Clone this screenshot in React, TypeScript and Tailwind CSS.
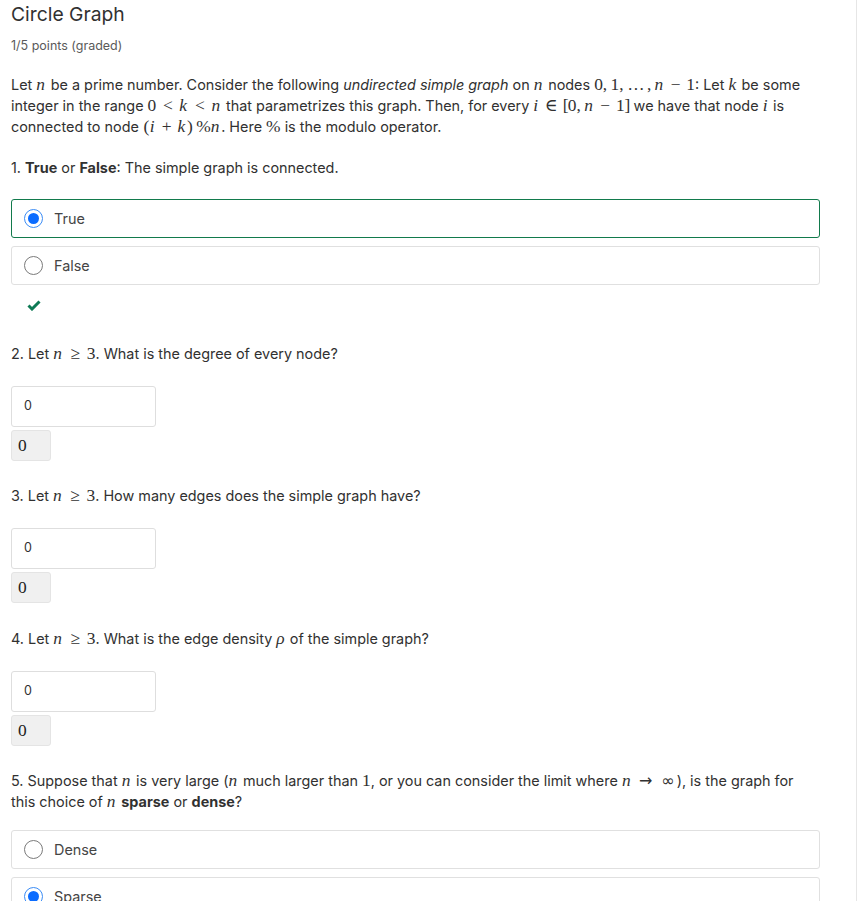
import React from "react";

const SERIF = '"Liberation Serif", "DejaVu Serif", serif';
const SYM = '"DejaVu Sans", "Liberation Serif", serif';

type GP = { children: React.ReactNode; w: string; it?: boolean; sym?: boolean; left?: boolean };
const G = ({ children, w, it, sym, left }: GP) => (
  <span
    className={`inline-block ${w} ${it || left ? "text-left" : "text-center"} ${it ? "italic" : ""} ${
      sym ? "text-[16px]" : "text-[17.4px]"
    }`}
    style={{ fontFamily: sym ? SYM : SERIF }}
  >
    {children}
  </span>
);

const N = () => <G w="w-[10.4px]" it>n</G>;
const K = () => <G w="w-[9.1px]" it>k</G>;
const I = () => <G w="w-[6.4px]" it>i</G>;
const Rho = () => <G w="w-[9.4px]" it>ρ</G>;
const D = ({ d }: { d: string }) => <G w="w-[8.7px]">{d}</G>;
const Comma = () => <G w="w-[7.7px]" left>{","}</G>;
const Rel = ({ s }: { s: string }) => <G w="w-[23.1px]">{s}</G>;
const RelSym = ({ s }: { s: string }) => <G w="w-[27px]" sym>{s}</G>;
const Bin = ({ s }: { s: string }) => <G w="w-[21.3px]">{s}</G>;
const Paren = ({ s }: { s: string }) => <G w="w-[6.8px]">{s}</G>;
const Brack = ({ s }: { s: string }) => <G w="w-[5px]">{s}</G>;
const Pct = () => <G w="w-[14.5px]">%</G>;
const Inf = () => <G w="w-[17.4px]" sym>∞</G>;
const Dots = () => (
  <span className="inline-flex w-[20px] justify-between text-[17.4px] pl-[1px] pr-[3px]" style={{ fontFamily: SERIF }}>
    <span>.</span>
    <span>.</span>
    <span>.</span>
  </span>
);

function Radio({ label, checked, correct }: { label: string; checked?: boolean; correct?: boolean }) {
  return (
    <div
      className={`h-[39px] rounded-[3px] border flex items-center pl-[12px] ${
        correct ? "border-[#127a4c]" : "border-[#e0e0e0]"
      }`}
    >
      {checked ? (
        <div className="w-[19px] h-[19px] rounded-full border-[1.5px] border-[#3b8cf5] flex items-center justify-center">
          <div className="w-[11px] h-[11px] rounded-full bg-[#0b6cff]" />
        </div>
      ) : (
        <div className="w-[19px] h-[19px] rounded-full border-[1.5px] border-[#7a7a7a] bg-white" />
      )}
      <span className="ml-[11px] text-[14.4px] text-[#454545]">{label}</span>
    </div>
  );
}

function NumAnswer() {
  return (
    <div>
      <div className="w-[145px] h-[41px] rounded-[3px] border border-[#dedede] flex items-center pl-[12px] text-[12.5px] text-[#313131]">
        0
      </div>
      <div
        className="mt-[3px] w-[40px] h-[31px] rounded-[3px] bg-[#f0f0f0] border border-[#e4e4e4] flex items-center pl-[6px] text-[17.4px] text-[#222]"
        style={{ fontFamily: SERIF }}
      >
        0
      </div>
    </div>
  );
}

export default function App() {
  return (
    <div
      className="w-[857px] min-h-screen border-r border-[#e6e6e6] bg-white text-[#313131]"
      style={{ fontFamily: 'Inter, "Noto Sans", sans-serif' }}
    >
      <div className="pl-[11px] pr-[36px]">
        <h1 className="text-[19.3px] leading-[28px] font-normal text-[#313131]">Circle Graph</h1>
        <div className="mt-[9px] text-[12.5px] leading-[18px] text-[#5a5a5a]">1/5 points (graded)</div>
        <p className="mt-[19px] text-[14.4px] leading-[21px]">
          Let <N /> be a prime number. Consider the following <em>undirected simple graph</em> on <N /> nodes{" "}
          <D d="0" />
          <Comma />
          <D d="1" />
          <Comma />
          <Dots />
          <Comma />
          <N />
          <Bin s="−" />
          <D d="1" />: Let <K /> be some
          <br />
          integer in the range <D d="0" />
          <Rel s="<" />
          <K />
          <Rel s="<" />
          <N /> that parametrizes this graph. Then, for every <I />
          <Rel s="∈" />
          <Brack s="[" />
          <D d="0" />
          <Comma />
          <N />
          <Bin s="−" />
          <D d="1" />
          <Brack s="]" /> we have that node <I /> is
          <br />
          connected to node <Paren s="(" />
          <I />
          <Bin s="+" />
          <K />
          <Paren s=")" />
          <span className="inline-block w-[3px]" />
          <Pct />
          <N />. Here <Pct /> is the modulo operator.
        </p>

        <p className="mt-[20px] text-[14.4px] leading-[21px]">
          1. <b>True</b> or <b>False</b>: The simple graph is connected.
        </p>
        <div className="mt-[21px] flex flex-col gap-[8px]">
          <Radio label="True" checked correct />
          <Radio label="False" />
        </div>
        <div className="mt-[11px] pl-[16px] h-[18px] flex items-center">
          <svg width="14" height="11" viewBox="0 0 14 11">
            <path d="M1.5 5.5 L5 9 L12.5 1.5" fill="none" stroke="#0e7a55" strokeWidth="3" strokeLinejoin="miter" />
          </svg>
        </div>

        <p className="mt-[29px] text-[14.4px] leading-[21px]">
          2. Let <N />
          <Rel s="≥" />
          <D d="3" />. What is the degree of every node?
        </p>
        <div className="mt-[22px]">
          <NumAnswer />
        </div>

        <p className="mt-[24px] text-[14.4px] leading-[21px]">
          3. Let <N />
          <Rel s="≥" />
          <D d="3" />. How many edges does the simple graph have?
        </p>
        <div className="mt-[22px]">
          <NumAnswer />
        </div>

        <p className="mt-[25px] text-[14.4px] leading-[21px]">
          4. Let <N />
          <Rel s="≥" />
          <D d="3" />. What is the edge density <Rho /> of the simple graph?
        </p>
        <div className="mt-[22px]">
          <NumAnswer />
        </div>

        <p className="mt-[24px] text-[14.4px] leading-[21px]">
          5. Suppose that <N /> is very large (<N /> much larger than <D d="1" />, or you can consider the limit where{" "}
          <N />
          <RelSym s="→" />
          <Inf />
          ), is the graph for
          <br />
          this choice of <N /> <b>sparse</b> or <b>dense</b>?
        </p>
        <div className="mt-[18px] flex flex-col gap-[8px] pb-[40px]">
          <Radio label="Dense" />
          <Radio label="Sparse" checked />
        </div>
      </div>
    </div>
  );
}
